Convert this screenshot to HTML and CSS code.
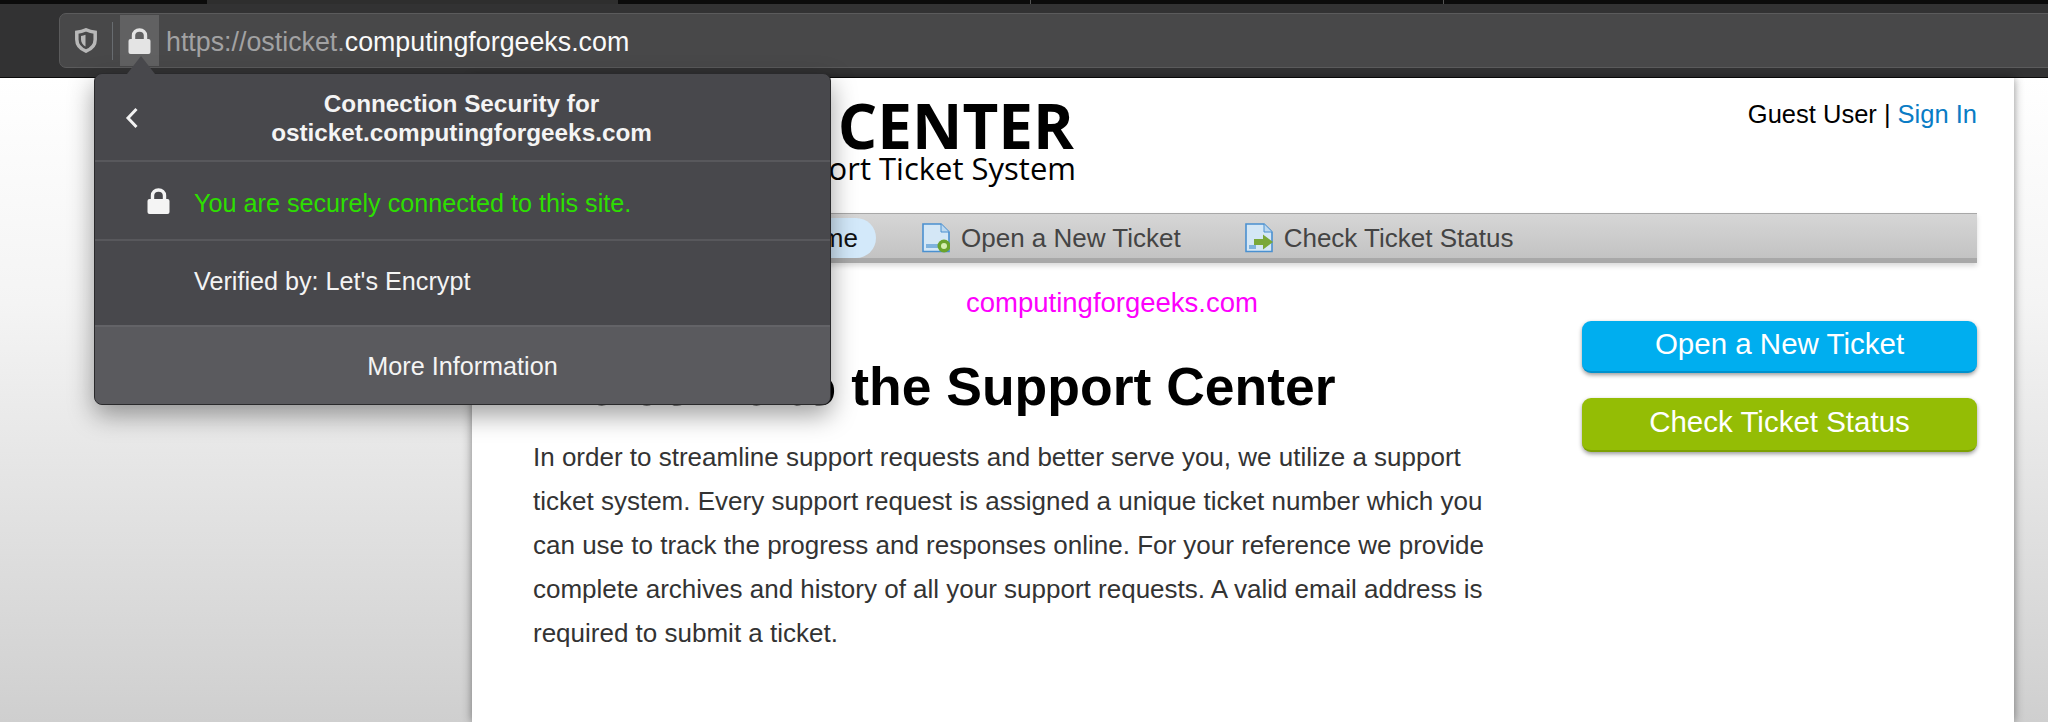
FILE: index.html
```html
<!DOCTYPE html>
<html lang="en">
<head>
<meta charset="utf-8">
<title>Support Center</title>
<link rel="stylesheet" href="styles.css">
</head>
<body>
<header class="chrome">
  <div class="tabstrip">
    <span class="tab tab-first"></span>
    <span class="tab tab-active"></span>
    <span class="tab tab-next"></span>
    <span class="tab tab-next"></span>
    <span class="tab tab-rest"></span>
  </div>
  <div class="toolbar">
    <div class="urlbar">
      <span class="shield-box">
        <svg class="shield" viewBox="0 0 22 25"><path d="M11 1.800C14 3.300 17 4.100 20.200 4.300V11.500C20.200 17 16 21.200 11 23.200C6 21.200 1.800 17 1.800 11.500V4.300C5 4.100 8 3.300 11 1.800Z" fill="none" stroke="#b8b8b8" stroke-width="3.500"/><path d="M10.500 6.800C9 7.400 7.600 7.800 6 8V11.600C6 14.400 7.800 17 10.500 18.600Z" fill="#b8b8b8"/></svg>
      </span>
      <span class="url-sep"></span>
      <span class="lock-box">
        <svg class="lock-icon" viewBox="0 0 23 26"><path d="M5.500 12V7.500C5.500 4 8 2 11.500 2S17.500 4 17.500 7.500V12" fill="none" stroke="#e4e4e4" stroke-width="3.400"/><rect x="0.500" y="11" width="22" height="15" rx="2" fill="#e4e4e4"/></svg>
      </span>
      <span class="url"><span class="url-dim">https://osticket.</span>computingforgeeks.com</span>
    </div>
  </div>
</header>

<div class="backdrop">
  <main class="panel">
    <div class="site-head">
      <div class="logo">
        <div class="logo-main">SUPPORT CENTER</div>
        <div class="logo-sub">Support Ticket System</div>
      </div>
      <div class="user">Guest User | <a class="signin" href="#">Sign In</a></div>
    </div>
    <nav class="nav">
      <a class="nav-item nav-home" href="#">Support Home</a>
      <a class="nav-item nav-open" href="#">
        <svg class="doc" viewBox="0 0 28 30"><path d="M1 1H19L27 9V28.500H1Z" fill="#d4e7f6" stroke="#4a90d0" stroke-width="1.600"/><path d="M19 1V9H27" fill="#bcd8ef" stroke="#4a90d0"/><rect x="4" y="21" width="12" height="4" fill="#7fb2de"/><circle cx="22" cy="23" r="6.500" fill="#6aa32c"/><circle cx="22" cy="23" r="3" fill="#d6eeb0"/></svg>
        Open a New Ticket
      </a>
      <a class="nav-item nav-check" href="#">
        <svg class="doc" viewBox="0 0 28 30"><path d="M1 1H19L27 9V28.500H1Z" fill="#d4e7f6" stroke="#4a90d0" stroke-width="1.600"/><path d="M19 1V9H27" fill="#bcd8ef" stroke="#4a90d0"/><rect x="4" y="22" width="7" height="4" fill="#7fb2de"/><path d="M9 16H18V11.500L28 19L18 26.500V22H9Z" fill="#7aa83a"/></svg>
        Check Ticket Status
      </a>
    </nav>
    <div class="content">
      <section class="main">
        <div class="brand">computingforgeeks.com</div>
        <h1 class="title">Welcome to the Support Center</h1>
        <p class="intro">In order to streamline support requests and better serve you, we utilize a support<br>ticket system. Every support request is assigned a unique ticket number which you<br>can use to track the progress and responses online. For your reference we provide<br>complete archives and history of all your support requests. A valid email address is<br>required to submit a ticket.</p>
      </section>
      <aside class="side">
        <a class="btn btn-blue" href="#">Open a New Ticket</a>
        <a class="btn btn-green" href="#">Check Ticket Status</a>
      </aside>
    </div>
  </main>
</div>

<div class="popup">
  <span class="popup-arrow"></span>
  <div class="popup-head">
    <svg class="chevron" viewBox="0 0 14 22"><path d="M11.500 2L3 11L11.500 20" fill="none" stroke="#f2f2f2" stroke-width="3"/></svg>
    <div class="popup-title">Connection Security for<br>osticket.computingforgeeks.com</div>
  </div>
  <div class="popup-row popup-secure">
    <svg class="popup-lock" viewBox="0 0 23 26"><path d="M5.500 12V7.500C5.500 4 8 2 11.500 2S17.500 4 17.500 7.500V12" fill="none" stroke="#f4f4f4" stroke-width="3.400"/><rect x="0.500" y="11" width="22" height="15" rx="2" fill="#f4f4f4"/></svg>
    <span class="secure-text">You are securely connected to this site.</span>
  </div>
  <div class="popup-row popup-verified">Verified by: Let's Encrypt</div>
  <div class="popup-foot">More Information</div>
</div>
</body>
</html>
```

FILE: styles.css
```css
* { box-sizing: border-box; }
html, body { margin: 0; height: 722px; overflow: hidden; }
body { font-family: "Liberation Sans", Arial, sans-serif; position: relative; display: flex; flex-direction: column; background: #fff; }
a { text-decoration: none; color: inherit; }

.chrome { flex: none; height: 78px; background: #323233; border-bottom: 1px solid #0c0c0c; }
.tabstrip { height: 4px; display: flex; background: #0b0b0b; }
.tab { display: block; height: 4px; }
.tab-first { width: 207px; }
.tab-active { width: 411px; background: #2e2e2e; }
.tab-next { width: 413px; border-right: 1px solid #555; }
.tab-rest { flex: 1; }

.toolbar { padding: 9px 0 0 59px; }
.urlbar { height: 55px; margin-right: -12px; display: flex; align-items: center; background: #484849; border: 1px solid #5b5b5c; border-radius: 7px; padding: 1px 0; }
.shield-box { width: 52px; display: flex; justify-content: center; }
.shield { width: 22px; height: 25px; }
.url-sep { width: 1px; height: 38px; background: #686c70; margin-right: 7px; }
.lock-box { width: 39px; height: 51px; background: #616162; display: flex; align-items: center; justify-content: center; }
.lock-icon { width: 23px; height: 26px; }
.url { margin-left: 7px; padding-top: 3px; font-size: 26.800px; color: #fafafa; white-space: nowrap; }
.url-dim { color: #a2a2a3; }

.backdrop { flex: 1; display: flex; background: linear-gradient(180deg, #ffffff 0%, #f4f4f4 35%, #cfcfcf 100%); padding: 0 34px 0 472px; }
.panel { width: 1542px; background: #fff; box-shadow: 0 0 9px rgba(0, 0, 0, .45); padding: 0 37px 0 60px; }

.site-head { height: 135px; display: flex; justify-content: space-between; }
.logo { width: 544px; padding-top: 14px; text-align: right; font-family: "Open Sans", sans-serif; color: #000; white-space: nowrap; }
.logo-main { font-size: 62px; font-weight: 700; line-height: 66px; padding-right: 2px; }
.logo-sub { font-size: 31px; line-height: 34px; margin-top: -7px; }
.user { font-size: 25.500px; padding-top: 22px; color: #000; }
.signin { color: #0a7cc5; }

.nav { height: 50px; display: flex; align-items: flex-start; background: linear-gradient(180deg, #d6d6d6, #c3c3c3); border-top: 1px solid #a8a8a8; border-bottom: 5px solid #a8a8a8; box-shadow: 0 3px 5px rgba(0, 0, 0, .15); padding-top: 4px; }
.nav-item { display: flex; align-items: center; height: 40px; font-size: 26px; color: #444; white-space: nowrap; }
.nav-home { width: 344px; justify-content: flex-end; padding-right: 18px; background: #d3e9fa; border-radius: 20px; color: #111; }
.nav-open { margin-left: 46px; }
.nav-check { margin-left: 64px; }
.doc { width: 28px; height: 30px; margin-right: 11px; }

.content { display: flex; }
.main { flex: 1; }
.brand { margin: 26px 0 0 434px; font-size: 27.500px; line-height: 28px; color: #fd00fd; }
.title { margin: 38px 0 0 5px; font-size: 53.500px; line-height: 64px; font-weight: 700; color: #000; white-space: nowrap; }
.intro { margin: 16px 0 0 1px; font-size: 26px; line-height: 44px; color: #333; white-space: nowrap; }
.side { width: 395px; padding-top: 58px; display: flex; flex-direction: column; gap: 25px; }
.btn { display: block; text-align: center; font-size: 29.500px; color: #fff; border-radius: 9px; box-shadow: 0 2px 4px rgba(0, 0, 0, .4); }
.btn-blue { height: 52px; line-height: 46px; background: #00aeef; border-bottom: 2px solid #0091cd; }
.btn-green { height: 54px; line-height: 48px; background: #94bd05; border-bottom: 2px solid #7da004; }

.popup { position: absolute; left: 94px; top: 73px; width: 737px; height: 332px; background: #48484c; border: 1px solid #2a2a2c; border-radius: 8px; box-shadow: 0 10px 26px rgba(0, 0, 0, .38); color: #f4f4f4; display: flex; flex-direction: column; font-size: 25.200px; }
.popup-arrow { position: absolute; left: 32px; top: -18px; width: 28px; height: 18px; background: #48484c; clip-path: polygon(50% 0, 100% 100%, 0 100%); }
.popup-head { height: 88px; flex: none; display: flex; align-items: center; justify-content: center; position: relative; border-bottom: 2px solid #58585c; padding: 1px 2px 0 0; }
.chevron { position: absolute; left: 30px; top: 33px; width: 14px; height: 22px; }
.popup-title { font-weight: 700; font-size: 24.300px; line-height: 29px; text-align: center; }
.popup-row { display: flex; align-items: center; padding-left: 99px; flex: none; position: relative; }
.popup-secure { height: 79px; border-bottom: 2px solid #58585c; padding-top: 5px; }
.popup-lock { position: absolute; left: 52px; top: 26px; width: 23px; height: 26px; }
.secure-text { color: #2ddf00; }
.popup-verified { height: 86px; border-bottom: 2px solid #636367; padding-bottom: 4px; }
.popup-foot { flex: 1; display: flex; align-items: center; justify-content: center; background: #5a5a5e; border-radius: 0 0 7px 7px; padding-top: 2px; }
```
